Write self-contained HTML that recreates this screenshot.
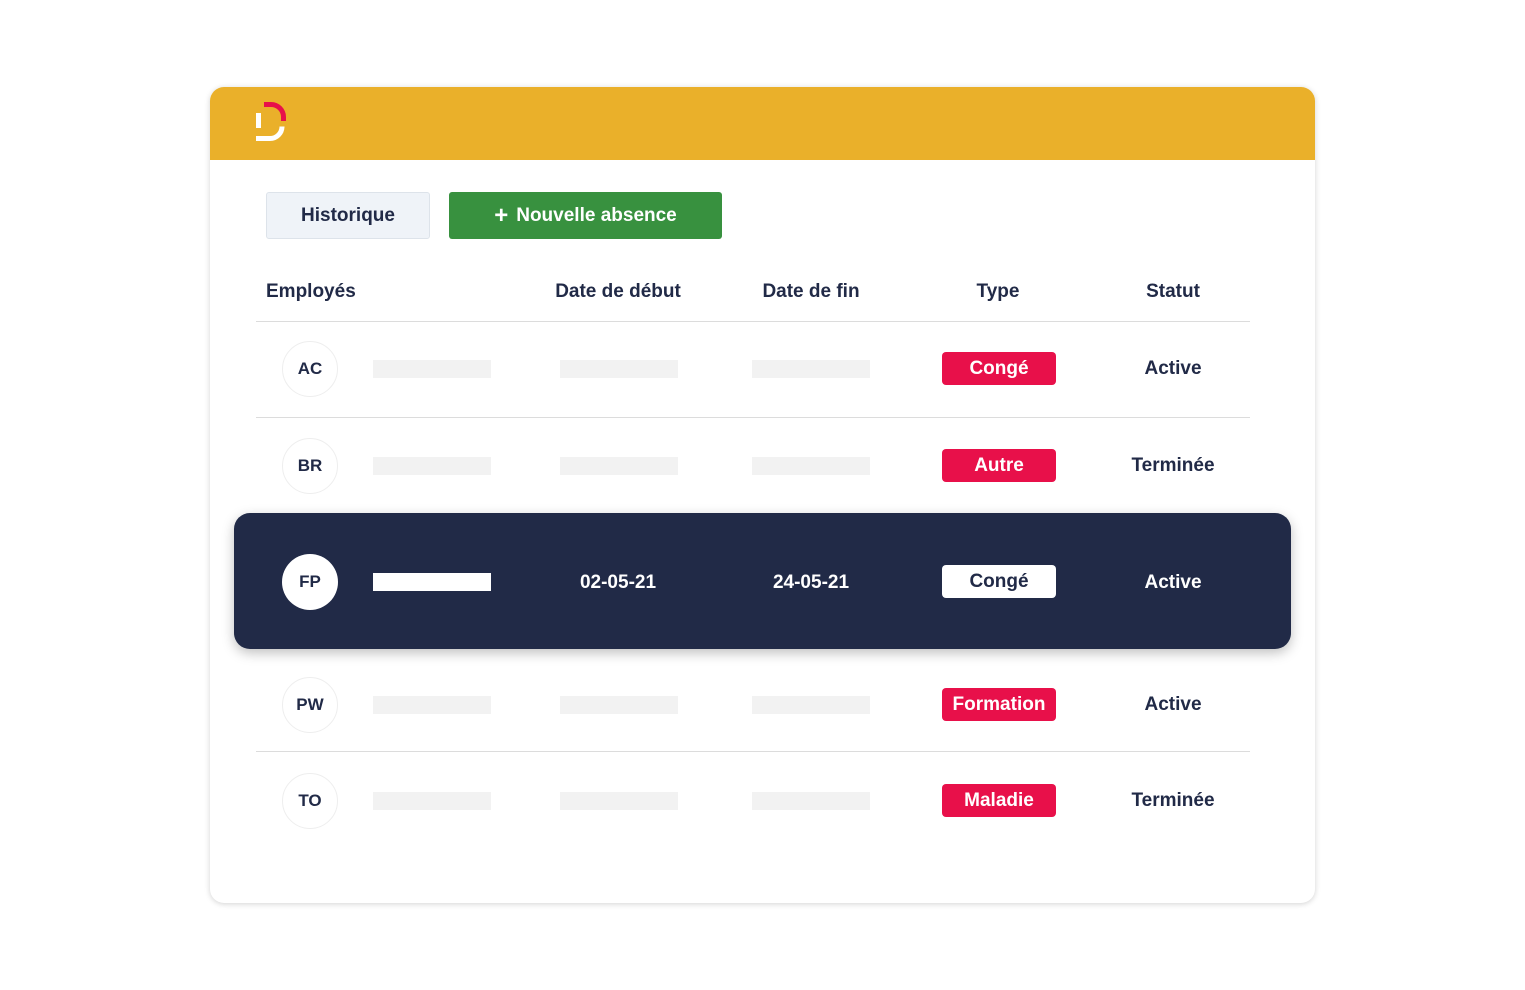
<!DOCTYPE html>
<html><head><meta charset="utf-8"><style>
*{margin:0;padding:0;box-sizing:border-box}
body{width:1525px;height:990px;background:#fff;font-family:"Liberation Sans",sans-serif;position:relative;overflow:hidden;color:#212a47}
.card{position:absolute;left:210px;top:87px;width:1105px;height:816px;border-radius:14px;background:#fff;box-shadow:0 1px 6px rgba(0,0,0,.18);overflow:hidden}
.hdr{position:absolute;left:0;top:0;width:100%;height:73px;background:#eab02a}
.a{position:absolute}
.btn{position:absolute;top:192px;height:47px;display:flex;align-items:center;justify-content:center;font-weight:bold;font-size:19px;border-radius:3px}
.th{position:absolute;top:281px;font-weight:bold;font-size:19px;transform:translateX(-50%);white-space:nowrap}
.div{position:absolute;left:256px;width:994px;height:1px;background:#dcdcdc}
.av{position:absolute;left:282px;width:56px;height:56px;border-radius:50%;background:#fff;border:1px solid #eee;display:flex;align-items:center;justify-content:center;font-weight:bold;font-size:17px}
.bar{position:absolute;width:118px;height:18px;background:#f2f2f2}
.badge{position:absolute;left:942px;width:114px;height:33px;border-radius:4px;background:#e8104a;color:#fff;font-weight:bold;font-size:19px;display:flex;align-items:center;justify-content:center}
.st{position:absolute;font-weight:bold;font-size:19px;transform:translateX(-50%);left:1173px;white-space:nowrap}
.dt{position:absolute;font-weight:bold;font-size:19px;color:#fff;transform:translateX(-50%)}
</style></head><body>
<div class="card"><div class="hdr"></div></div>
<svg class="a" style="left:0;top:0" width="400" height="160">
<path d="M258.5,113 V128" stroke="#fff" stroke-width="5" fill="none"/>
<path d="M264,104.5 H271 A12.5,12.5 0 0 1 283.5,117 V121" stroke="#e8104a" stroke-width="5" fill="none"/>
<path d="M256,138.5 H270 A12,12 0 0 0 282,126.5" stroke="#fff" stroke-width="5" fill="none"/>
</svg>
<div class="btn" style="left:266px;width:164px;background:#eff3f8;border:1px solid #dde3ea">Historique</div>
<div class="btn" style="left:449px;width:273px;background:#38913f;color:#fff"><span style="font-size:24px;margin-right:8px;font-weight:bold">+</span>Nouvelle absence</div>
<div class="th" style="left:266px;transform:none">Employés</div>
<div class="th" style="left:618px">Date de début</div>
<div class="th" style="left:811px">Date de fin</div>
<div class="th" style="left:998px">Type</div>
<div class="th" style="left:1173px">Statut</div>
<div class="div" style="top:321px"></div>
<div class="div" style="top:417px"></div>
<div class="div" style="top:751px"></div>

<div class="av" style="top:341px">AC</div>
<div class="bar" style="left:373px;top:360px"></div><div class="bar" style="left:560px;top:360px"></div><div class="bar" style="left:752px;top:360px"></div>
<div class="badge" style="top:352px">Congé</div><div class="st" style="top:358px">Active</div>

<div class="av" style="top:438px">BR</div>
<div class="bar" style="left:373px;top:457px"></div><div class="bar" style="left:560px;top:457px"></div><div class="bar" style="left:752px;top:457px"></div>
<div class="badge" style="top:449px">Autre</div><div class="st" style="top:455px">Terminée</div>

<div class="a" style="left:234px;top:513px;width:1057px;height:136px;border-radius:16px;background:#212a47;box-shadow:0 4px 12px rgba(0,0,0,.25)"></div>
<div class="av" style="top:554px;border:none">FP</div>
<div class="bar" style="left:373px;top:573px;background:#fff"></div>
<div class="dt" style="left:618px;top:572px">02-05-21</div>
<div class="dt" style="left:811px;top:572px">24-05-21</div>
<div class="badge" style="top:565px;background:#fff;color:#212a47">Congé</div>
<div class="st" style="top:572px;color:#fff">Active</div>

<div class="av" style="top:677px">PW</div>
<div class="bar" style="left:373px;top:696px"></div><div class="bar" style="left:560px;top:696px"></div><div class="bar" style="left:752px;top:696px"></div>
<div class="badge" style="top:688px">Formation</div><div class="st" style="top:694px">Active</div>

<div class="av" style="top:773px">TO</div>
<div class="bar" style="left:373px;top:792px"></div><div class="bar" style="left:560px;top:792px"></div><div class="bar" style="left:752px;top:792px"></div>
<div class="badge" style="top:784px">Maladie</div><div class="st" style="top:790px">Terminée</div>
</body></html>
